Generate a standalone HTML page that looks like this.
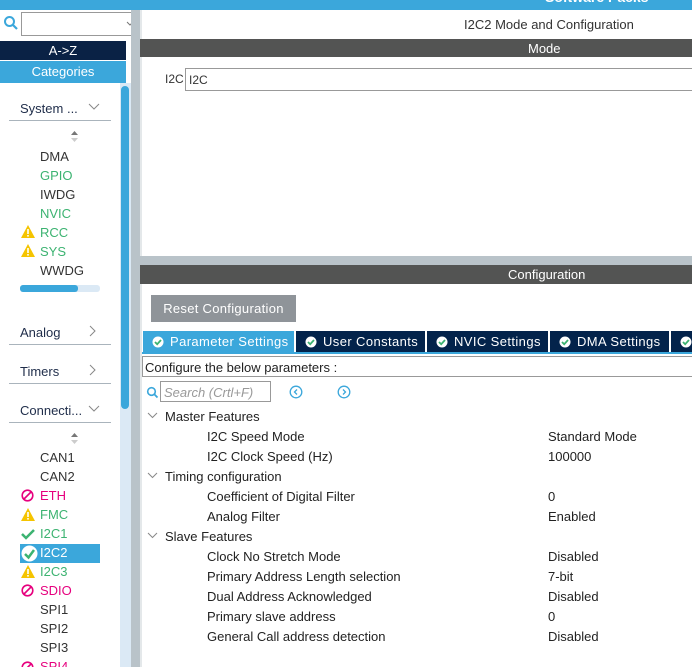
<!DOCTYPE html>
<html><head><meta charset="utf-8"><style>
*{margin:0;padding:0;box-sizing:border-box}
html,body{width:692px;height:667px;overflow:hidden}
body{position:relative;background:#fff;font-family:"Liberation Sans",sans-serif;font-size:13px;color:#333}
.a{position:absolute;white-space:nowrap}
.it{position:absolute;left:40px;font-size:13px;line-height:16px}
.g{color:#3cb371}.p{color:#e6007e}
.ico{position:absolute;left:21px}
.row{position:absolute;font-size:13px;line-height:16px;color:#222}
.tab{position:absolute;top:331px;height:21px;background:#03234b;color:#fff;font-size:13px;line-height:21px;padding-left:9px;letter-spacing:0.4px;overflow:hidden}
.tab svg{vertical-align:-2px;margin-right:6px}
.ul{position:absolute;left:9px;width:102px;height:1px;background:#aab4bc}
</style></head><body>
<div class="a" style="left:0;top:0;width:692px;height:10px;background:#3ba7db;overflow:hidden"><div class="a" style="left:545px;top:-11px;color:#fff;font-weight:bold;font-size:14px">Software Packs</div></div>
<svg class="a" style="left:3px;top:15px" width="16" height="16"><circle cx="6.5" cy="6.5" r="4.5" fill="none" stroke="#3ba7db" stroke-width="2"/><line x1="10" y1="10" x2="14" y2="14" stroke="#3ba7db" stroke-width="2.2"/></svg>
<div class="a" style="left:21px;top:12px;width:115px;height:24px;border:1px solid #999;background:#fff"></div>
<svg class="a" style="left:126px;top:21px" width="8" height="6"><polyline points="1,1 4,4 7,1" fill="none" stroke="#777"/></svg>
<div class="a" style="left:0;top:41px;width:126px;height:19px;background:#0a2245;color:#fff;text-align:center;line-height:19px">A-&gt;Z</div>
<div class="a" style="left:0;top:61px;width:126px;height:22px;background:#3ba7db;color:#fff;text-align:center;line-height:22px">Categories</div>
<div class="a" style="left:120px;top:83px;width:11px;height:584px;background:#dbe9f5"></div>
<div class="a" style="left:121px;top:86px;width:8px;height:323px;background:#3ba7db;border-radius:4px"></div>
<div class="a" style="left:131px;top:10px;width:9px;height:657px;background:#b9c3c9"></div>

<div class="a" style="left:20px;top:101px;color:#1f2d4a">System ...</div>
<svg class="a" style="left:88px;top:103px" width="12" height="8"><polyline points="1,1 6,6 11,1" fill="none" stroke="#888"/></svg>
<div class="ul" style="top:120px"></div>
<svg class="a" style="left:70px;top:131px" width="9" height="12"><polygon points="4.5,0 8,4 1,4" fill="#777"/><polygon points="1,7 8,7 4.5,11" fill="#ccc"/></svg>
<div class="it" style="top:149px">DMA</div>
<div class="it g" style="top:168px">GPIO</div>
<div class="it" style="top:187px">IWDG</div>
<div class="it g" style="top:206px">NVIC</div>
<svg class="ico" style="top:225px" width="14" height="13"><polygon points="7,0 14,13 0,13" fill="#f5c400"/><rect x="6.2" y="4" width="1.6" height="5" fill="#fff"/><rect x="6.2" y="10" width="1.6" height="1.6" fill="#fff"/></svg>
<div class="it g" style="top:225px">RCC</div>
<svg class="ico" style="top:244px" width="14" height="13"><polygon points="7,0 14,13 0,13" fill="#f5c400"/><rect x="6.2" y="4" width="1.6" height="5" fill="#fff"/><rect x="6.2" y="10" width="1.6" height="1.6" fill="#fff"/></svg>
<div class="it g" style="top:244px">SYS</div>
<div class="it" style="top:263px">WWDG</div>
<div class="a" style="left:20px;top:285px;width:80px;height:7px;background:#dbe9f5;border-radius:3px"></div>
<div class="a" style="left:20px;top:285px;width:58px;height:7px;background:#3ba7db;border-radius:3px"></div>

<div class="a" style="left:20px;top:325px;color:#1f2d4a">Analog</div>
<svg class="a" style="left:89px;top:325px" width="8" height="12"><polyline points="1,1 6,6 1,11" fill="none" stroke="#888"/></svg>
<div class="ul" style="top:344px"></div>
<div class="a" style="left:20px;top:364px;color:#1f2d4a">Timers</div>
<svg class="a" style="left:89px;top:364px" width="8" height="12"><polyline points="1,1 6,6 1,11" fill="none" stroke="#888"/></svg>
<div class="ul" style="top:383px"></div>
<div class="a" style="left:20px;top:403px;color:#1f2d4a">Connecti...</div>
<svg class="a" style="left:88px;top:405px" width="12" height="8"><polyline points="1,1 6,6 11,1" fill="none" stroke="#888"/></svg>
<div class="ul" style="top:422px"></div>
<svg class="a" style="left:70px;top:433px" width="9" height="12"><polygon points="4.5,0 8,4 1,4" fill="#777"/><polygon points="1,7 8,7 4.5,11" fill="#ccc"/></svg>
<div class="it" style="top:450px">CAN1</div>
<div class="it" style="top:469px">CAN2</div>
<svg class="ico" style="top:489px" width="13" height="13"><circle cx="6.5" cy="6.5" r="5.3" fill="none" stroke="#e6007e" stroke-width="1.6"/><line x1="3" y1="10" x2="10" y2="3" stroke="#e6007e" stroke-width="1.6"/></svg>
<div class="it p" style="top:488px">ETH</div>
<svg class="ico" style="top:508px" width="14" height="13"><polygon points="7,0 14,13 0,13" fill="#f5c400"/><rect x="6.2" y="4" width="1.6" height="5" fill="#fff"/><rect x="6.2" y="10" width="1.6" height="1.6" fill="#fff"/></svg>
<div class="it g" style="top:507px">FMC</div>
<svg class="ico" style="top:528px" width="14" height="12"><polyline points="1,6 5,10 13,2" fill="none" stroke="#3cb371" stroke-width="2.5"/></svg>
<div class="it g" style="top:526px">I2C1</div>
<div class="a" style="left:20px;top:544px;width:80px;height:19px;background:#3ba7db"></div>
<svg class="ico" style="top:545px" width="17" height="17"><circle cx="8.5" cy="8.5" r="8" fill="#fff"/><polyline points="4,9 7.5,12.5 13,5" fill="none" stroke="#3cb371" stroke-width="2.5"/></svg>
<div class="it" style="top:545px;color:#fff">I2C2</div>
<svg class="ico" style="top:565px" width="14" height="13"><polygon points="7,0 14,13 0,13" fill="#f5c400"/><rect x="6.2" y="4" width="1.6" height="5" fill="#fff"/><rect x="6.2" y="10" width="1.6" height="1.6" fill="#fff"/></svg>
<div class="it g" style="top:564px">I2C3</div>
<svg class="ico" style="top:584px" width="13" height="13"><circle cx="6.5" cy="6.5" r="5.3" fill="none" stroke="#e6007e" stroke-width="1.6"/><line x1="3" y1="10" x2="10" y2="3" stroke="#e6007e" stroke-width="1.6"/></svg>
<div class="it p" style="top:583px">SDIO</div>
<div class="it" style="top:602px">SPI1</div>
<div class="it" style="top:621px">SPI2</div>
<div class="it" style="top:640px">SPI3</div>
<svg class="ico" style="top:661px" width="13" height="13"><circle cx="6.5" cy="6.5" r="5.3" fill="none" stroke="#e6007e" stroke-width="1.6"/><line x1="3" y1="10" x2="10" y2="3" stroke="#e6007e" stroke-width="1.6"/></svg>
<div class="it p" style="top:659px">SPI4</div>

<div class="a" style="left:140px;top:10px;width:2px;height:657px;background:#e4e8ea"></div>
<div class="a" style="left:464px;top:17px;color:#333">I2C2 Mode and Configuration</div>
<div class="a" style="left:140px;top:39px;width:552px;height:18px;background:#535453;color:#fff;line-height:19px;padding-left:388px">Mode</div>
<div class="a" style="left:165px;top:72px;color:#333;font-size:12px">I2C</div>
<div class="a" style="left:185px;top:68px;width:510px;height:23px;border:1px solid #999;padding:4px 0 0 3px;color:#333;font-size:12px">I2C</div>
<div class="a" style="left:140px;top:256px;width:552px;height:9px;background:#b9c3c9"></div>
<div class="a" style="left:140px;top:265px;width:552px;height:19px;background:#535453;color:#fff;line-height:19px;padding-left:368px">Configuration</div>
<div class="a" style="left:151px;top:295px;width:145px;height:27px;background:#8f9499;color:#fff;line-height:27px;text-align:center;letter-spacing:0.3px">Reset Configuration</div>

<div class="tab" style="left:143px;width:151px;background:#3ba7db"><svg width="12" height="12"><circle cx="6" cy="6" r="5.5" fill="#fff"/><polyline points="3,6 5.2,8.2 9,4" fill="none" stroke="#3cb371" stroke-width="1.8"/></svg>Parameter Settings</div>
<div class="tab" style="left:296px;width:129px"><svg width="12" height="12"><circle cx="6" cy="6" r="5.5" fill="#fff"/><polyline points="3,6 5.2,8.2 9,4" fill="none" stroke="#3cb371" stroke-width="1.8"/></svg>User Constants</div>
<div class="tab" style="left:427px;width:121px"><svg width="12" height="12"><circle cx="6" cy="6" r="5.5" fill="#fff"/><polyline points="3,6 5.2,8.2 9,4" fill="none" stroke="#3cb371" stroke-width="1.8"/></svg>NVIC Settings</div>
<div class="tab" style="left:550px;width:119px"><svg width="12" height="12"><circle cx="6" cy="6" r="5.5" fill="#fff"/><polyline points="3,6 5.2,8.2 9,4" fill="none" stroke="#3cb371" stroke-width="1.8"/></svg>DMA Settings</div>
<div class="tab" style="left:671px;width:21px"><svg width="12" height="12"><circle cx="6" cy="6" r="5.5" fill="#fff"/><polyline points="3,6 5.2,8.2 9,4" fill="none" stroke="#3cb371" stroke-width="1.8"/></svg></div>
<div class="a" style="left:142px;top:352px;width:550px;height:2px;background:#3ba7db"></div>
<div class="a" style="left:142px;top:356px;width:552px;height:21px;border:1px solid #999;padding:3px 0 0 2px;color:#222">Configure the below parameters :</div>
<svg class="a" style="left:146px;top:386px" width="13" height="13"><circle cx="5.5" cy="5.5" r="3.8" fill="none" stroke="#3ba7db" stroke-width="1.6"/><line x1="8.3" y1="8.3" x2="11.5" y2="11.5" stroke="#3ba7db" stroke-width="1.8"/></svg>
<div class="a" style="left:160px;top:381px;width:111px;height:21px;border:1px solid #999;padding:3px 0 0 3px;color:#999;font-style:italic">Search (Crtl+F)</div>
<svg class="a" style="left:289px;top:385px" width="14" height="14"><circle cx="7" cy="7" r="5.8" fill="none" stroke="#3ba7db" stroke-width="1.3"/><polyline points="8,4.5 5.5,7 8,9.5" fill="none" stroke="#3ba7db" stroke-width="1.3"/></svg>
<svg class="a" style="left:337px;top:385px" width="14" height="14"><circle cx="7" cy="7" r="5.8" fill="none" stroke="#3ba7db" stroke-width="1.3"/><polyline points="6,4.5 8.5,7 6,9.5" fill="none" stroke="#3ba7db" stroke-width="1.3"/></svg>

<svg class="a" style="left:147px;top:412px" width="11" height="8"><polyline points="1,1 5.5,5.5 10,1" fill="none" stroke="#888"/></svg>
<div class="row" style="left:165px;top:409px">Master Features</div>
<div class="row" style="left:207px;top:429px">I2C Speed Mode</div><div class="row" style="left:548px;top:429px">Standard Mode</div>
<div class="row" style="left:207px;top:449px">I2C Clock Speed (Hz)</div><div class="row" style="left:548px;top:449px">100000</div>
<svg class="a" style="left:147px;top:472px" width="11" height="8"><polyline points="1,1 5.5,5.5 10,1" fill="none" stroke="#888"/></svg>
<div class="row" style="left:165px;top:469px">Timing configuration</div>
<div class="row" style="left:207px;top:489px">Coefficient of Digital Filter</div><div class="row" style="left:548px;top:489px">0</div>
<div class="row" style="left:207px;top:509px">Analog Filter</div><div class="row" style="left:548px;top:509px">Enabled</div>
<svg class="a" style="left:147px;top:532px" width="11" height="8"><polyline points="1,1 5.5,5.5 10,1" fill="none" stroke="#888"/></svg>
<div class="row" style="left:165px;top:529px">Slave Features</div>
<div class="row" style="left:207px;top:549px">Clock No Stretch Mode</div><div class="row" style="left:548px;top:549px">Disabled</div>
<div class="row" style="left:207px;top:569px">Primary Address Length selection</div><div class="row" style="left:548px;top:569px">7-bit</div>
<div class="row" style="left:207px;top:589px">Dual Address Acknowledged</div><div class="row" style="left:548px;top:589px">Disabled</div>
<div class="row" style="left:207px;top:609px">Primary slave address</div><div class="row" style="left:548px;top:609px">0</div>
<div class="row" style="left:207px;top:629px">General Call address detection</div><div class="row" style="left:548px;top:629px">Disabled</div>
</body></html>
